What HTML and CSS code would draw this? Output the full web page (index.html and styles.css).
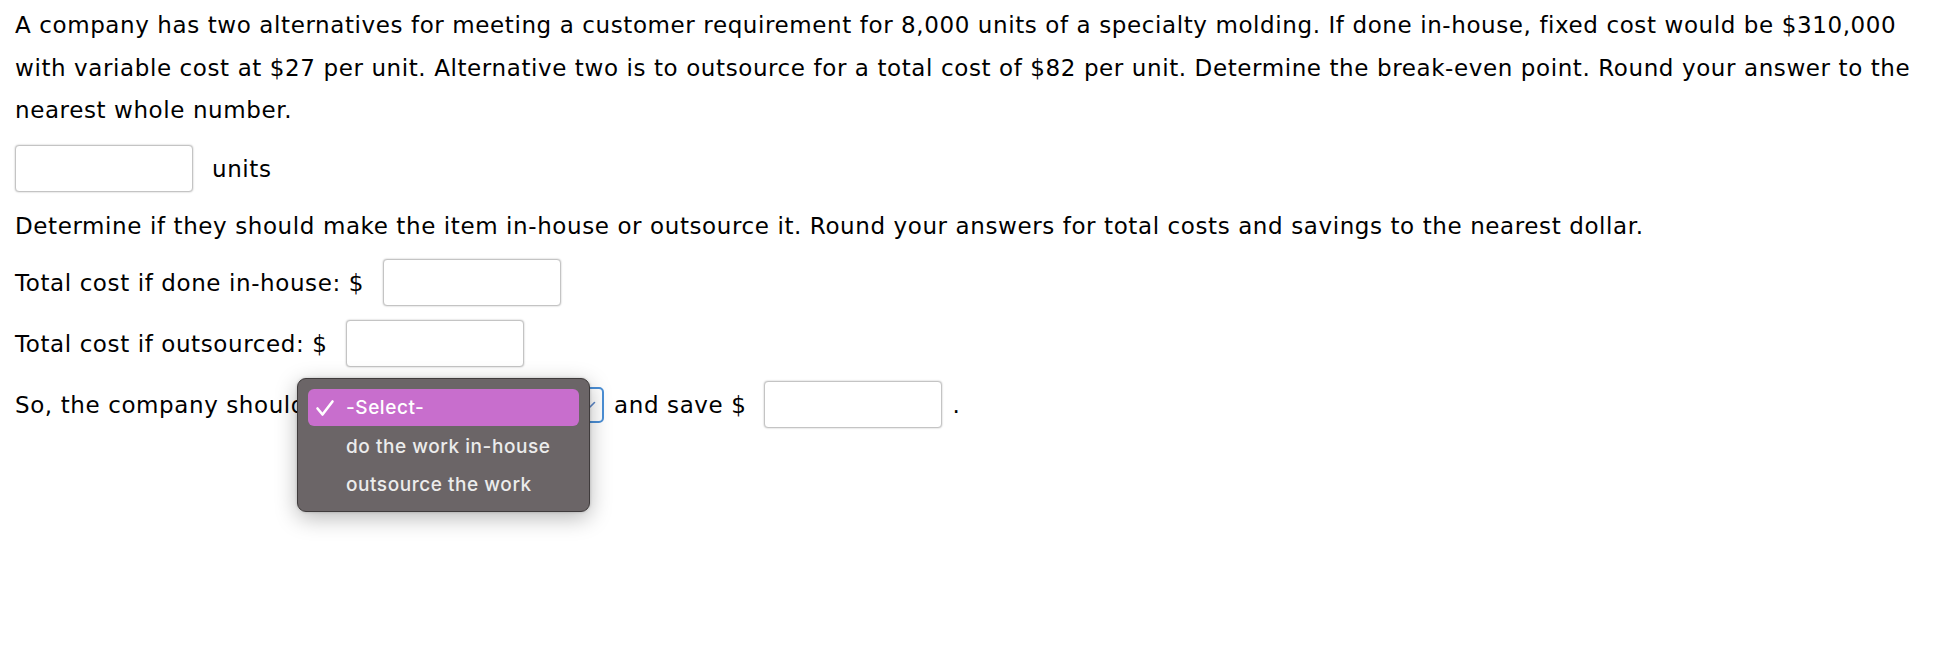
FILE: index.html
```html
<!DOCTYPE html>
<html lang="en">
<head>
<meta charset="utf-8">
<title>Break-even question</title>
<link rel="stylesheet" href="styles.css">
</head>
<body>
<div class="page">
  <p class="question">A company has two alternatives for meeting a customer requirement for 8,000 units of a specialty molding. If done in-house, fixed cost would be $310,000 with variable cost at $27 per unit. Alternative two is to outsource for a total cost of $82 per unit. Determine the break-even point. Round your answer to the nearest whole number.</p>

  <div class="row">
    <span class="field"></span>
    <span class="after">units</span>
  </div>

  <p class="line">Determine if they should make the item in-house or outsource it. Round your answers for total costs and savings to the nearest dollar.</p>

  <div class="row">
    <span class="before">Total cost if done in-house: $</span>
    <span class="field"></span>
  </div>

  <div class="row">
    <span class="before">Total cost if outsourced: $</span>
    <span class="field"></span>
  </div>

  <div class="row last">
    <span class="text">So, the company should</span>
    <span class="select">
      <svg class="chev" width="12" height="8" viewBox="0 0 12 8"><path d="M1.5 1.5 L6 6 L10.5 1.5" fill="none" stroke="#5b87c9" stroke-width="1.6" stroke-linecap="round" stroke-linejoin="round"/></svg>
    </span>
    <span class="mid">and save $</span>
    <span class="field"></span>
    <span class="dot">.</span>

    <div class="popup">
      <div class="opt selected">
        <svg class="check" width="20" height="18" viewBox="0 0 20 18"><path d="M2.5 9.5 L7.5 15.5 L17.5 2.5" fill="none" stroke="#ffffff" stroke-width="2.6" stroke-linecap="round" stroke-linejoin="round"/></svg>
        <span>-Select-</span>
      </div>
      <div class="opt"><span>do the work in-house</span></div>
      <div class="opt"><span>outsource the work</span></div>
    </div>
  </div>
</div>
</body>
</html>
```

FILE: styles.css
```css
html, body {
  margin: 0;
  padding: 0;
  background: #ffffff;
}

body {
  min-height: 650px;
}

.page {
  box-sizing: border-box;
  min-height: 650px;
  padding: 4px 15px 0 15px;
  display: flex;
  flex-direction: column;
  gap: 13px;
  font-family: "DejaVu Sans", Verdana, sans-serif;
  font-size: 23px;
  letter-spacing: 0.6px;
  color: #000000;
}

.question {
  margin: 0;
  line-height: 42.5px;
}

.line {
  margin: 0;
  height: 40px;
  line-height: 40px;
  white-space: nowrap;
}

.row {
  position: relative;
  display: flex;
  align-items: center;
  height: 48px;
  white-space: nowrap;
}

.field {
  display: block;
  box-sizing: border-box;
  width: 178px;
  height: 47px;
  background: #ffffff;
  border: 1px solid #c4c4c4;
  border-radius: 4px;
  box-shadow: 0 0 2px rgba(0, 0, 0, 0.28);
}

.after {
  margin-left: 19px;
}

.before {
  margin-right: 19px;
}

.select {
  position: relative;
  display: block;
  box-sizing: border-box;
  width: 290px;
  height: 36px;
  margin-left: 8px;
  border: 2px solid #4b8fd6;
  border-radius: 5px;
  background: #ffffff;
}

.chev {
  position: absolute;
  right: 6px;
  top: 12px;
}

.mid {
  margin-left: 10px;
  margin-right: 18px;
}

.dot {
  margin-left: 10px;
}

.popup {
  position: absolute;
  left: 282px;
  top: -3px;
  box-sizing: border-box;
  width: 293px;
  height: 134px;
  padding: 10px 10px 0 10px;
  background: #6b6567;
  border: 1px solid #3f3b3c;
  border-radius: 9px;
  box-shadow: 0 6px 22px rgba(0, 0, 0, 0.28), 0 0 3px rgba(0, 0, 0, 0.2);
  font-family: Inter, "Noto Sans", sans-serif;
  font-size: 19px;
  font-weight: 500;
  letter-spacing: 0.55px;
  color: #ececec;
  z-index: 2;
}

.opt {
  position: relative;
  display: flex;
  align-items: center;
  height: 38.5px;
  padding-left: 38px;
  border-radius: 6px;
}

.opt.selected {
  height: 37px;
  margin-bottom: 1.5px;
  background: #c86ecd;
  color: #ffffff;
}

.check {
  position: absolute;
  left: 7px;
  top: 10px;
}
```
